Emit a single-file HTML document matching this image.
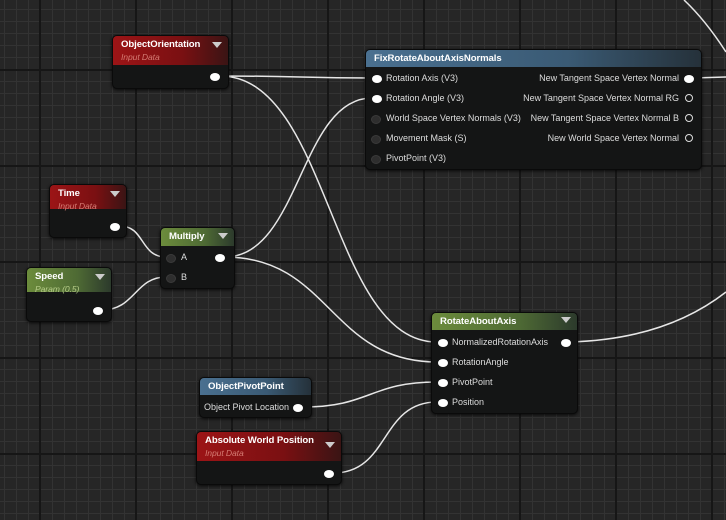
<!DOCTYPE html>
<html><head><meta charset="utf-8"><style>
html,body{margin:0;padding:0}
body{width:726px;height:520px;overflow:hidden;position:relative;font-family:"Liberation Sans",sans-serif;
background-color:#262626;
background-image:
linear-gradient(#161616 0 2px,transparent 2px),
linear-gradient(90deg,#161616 0 2px,transparent 2px),
linear-gradient(#333 0 1px,transparent 1px),
linear-gradient(90deg,#333 0 1px,transparent 1px);
background-size:96px 96px,96px 96px,12px 12px,12px 12px;
background-position:0 69px,39px 0,0 9px,4px 0;}
.n{position:absolute;background:#141515;border-radius:5px;box-shadow:0 1px 3px rgba(0,0,0,.8);border:1px solid #0a0a0a;color:#ddd;font-size:9px}
.h{border-radius:4px 4px 0 0;padding:3px 8px 2px;font-weight:bold;font-size:9.6px;color:#fff;position:relative;letter-spacing:-0.1px}
.h i{display:block;font-weight:normal;font-size:8.6px;margin-top:2px}
.red{background:linear-gradient(90deg,#9c1416 0%,#7a1012 60%,#3a1414 100%)}
.red i{color:#d47a72}
.grn{background:linear-gradient(90deg,#6c8c3c 0%,#4e6a34 60%,#2c3a2c 100%)}
.grn i{color:#b6cc88}
.blu{background:linear-gradient(90deg,#4a7090 0%,#3a5a74 60%,#25313a 100%)}
.arr{position:absolute;right:6px;top:6px;width:0;height:0;border-left:5px solid transparent;border-right:5px solid transparent;border-top:6px solid #ccc}
.r{position:absolute;white-space:nowrap}
svg{position:absolute;left:0;top:0}
.p{position:absolute;width:10px;height:8px;border-radius:50%;background:#fff}
.po{position:absolute;width:6px;height:6px;border-radius:50%;border:1.3px solid #ddd}
.pd{position:absolute;width:8px;height:7px;border-radius:50%;background:#2e2e2e;border:1px solid #3a3a3a}
</style></head><body>
<svg width="726" height="520" fill="none" stroke="#e6e6e6" stroke-width="1.5">
<path d="M220 76 C300 76 300 78 372 78"/>
<path d="M220 76 C330 76 330 342 437 342"/>
<path d="M225 257 C300 257 300 98 372 98"/>
<path d="M225 257 C330 257 330 362 437 362"/>
<path d="M120 226 C145 226 140 257 166 257"/>
<path d="M102 310 C135 310 135 277 166 277"/>
<path d="M303 407 C370 407 370 382 437 382"/>
<path d="M333 473 C390 473 380 402 437 402"/>
<path d="M693 78 L726 77"/>
<path d="M570 342 C640 340 690 320 726 292"/>
<path d="M684 0 C700 15 715 35 726 52"/>
</svg>

<div class="n" style="left:112px;top:35px;width:115px;height:52px">
<div class="h red" style="height:24px">ObjectOrientation<i>Input Data</i><div class="arr"></div></div>
<div class="p" style="left:97px;top:37px"></div></div>

<div class="n" style="left:365px;top:49px;width:335px;height:119px">
<div class="h blu" style="height:12px">FixRotateAboutAxisNormals</div>
<div class="p" style="left:6px;top:25px"></div><div class="r" style="left:20px;top:23px">Rotation Axis (V3)</div>
<div class="p" style="left:6px;top:45px"></div><div class="r" style="left:20px;top:43px">Rotation Angle (V3)</div>
<div class="pd" style="left:5px;top:65px"></div><div class="r" style="left:20px;top:63px">World Space Vertex Normals (V3)</div>
<div class="pd" style="left:5px;top:85px"></div><div class="r" style="left:20px;top:83px">Movement Mask (S)</div>
<div class="pd" style="left:5px;top:105px"></div><div class="r" style="left:20px;top:103px">PivotPoint (V3)</div>
<div class="r" style="right:22px;top:23px">New Tangent Space Vertex Normal</div><div class="p" style="right:7px;top:25px"></div>
<div class="r" style="right:22px;top:43px">New Tangent Space Vertex Normal RG</div><div class="po" style="right:8px;top:44px"></div>
<div class="r" style="right:22px;top:63px">New Tangent Space Vertex Normal B</div><div class="po" style="right:8px;top:64px"></div>
<div class="r" style="right:22px;top:83px">New World Space Vertex Normal</div><div class="po" style="right:8px;top:84px"></div>
</div>

<div class="n" style="left:49px;top:184px;width:76px;height:52px">
<div class="h red" style="height:19px">Time<i>Input Data</i><div class="arr"></div></div>
<div class="p" style="left:60px;top:38px"></div></div>

<div class="n" style="left:26px;top:267px;width:84px;height:53px">
<div class="h grn" style="height:19px">Speed<i>Param (0.5)</i><div class="arr"></div></div>
<div class="p" style="left:66px;top:39px"></div></div>

<div class="n" style="left:160px;top:227px;width:73px;height:60px">
<div class="h grn" style="height:13px">Multiply<div class="arr" style="top:5px"></div></div>
<div class="pd" style="left:5px;top:26px"></div><div class="r" style="left:20px;top:24px">A</div>
<div class="pd" style="left:5px;top:46px"></div><div class="r" style="left:20px;top:44px">B</div>
<div class="p" style="left:54px;top:26px"></div></div>

<div class="n" style="left:431px;top:312px;width:145px;height:100px">
<div class="h grn" style="height:12px">RotateAboutAxis<div class="arr" style="top:4px"></div></div>
<div class="p" style="left:6px;top:26px"></div><div class="r" style="left:20px;top:24px">NormalizedRotationAxis</div>
<div class="p" style="left:129px;top:26px"></div>
<div class="p" style="left:6px;top:46px"></div><div class="r" style="left:20px;top:44px">RotationAngle</div>
<div class="p" style="left:6px;top:66px"></div><div class="r" style="left:20px;top:64px">PivotPoint</div>
<div class="p" style="left:6px;top:86px"></div><div class="r" style="left:20px;top:84px">Position</div>
</div>

<div class="n" style="left:199px;top:377px;width:111px;height:39px">
<div class="h blu" style="height:12px">ObjectPivotPoint</div>
<div class="r" style="left:4px;top:24px">Object Pivot Location</div>
<div class="p" style="left:93px;top:26px"></div></div>

<div class="n" style="left:196px;top:431px;width:144px;height:52px">
<div class="h red" style="height:24px">Absolute World Position<i>Input Data</i><div class="arr" style="top:10px"></div></div>
<div class="p" style="left:127px;top:38px"></div></div>
</body></html>
